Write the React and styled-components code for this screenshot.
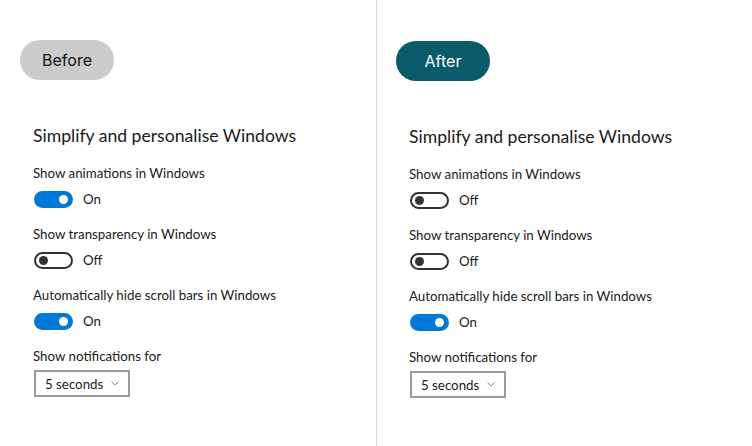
import React from 'react';
import styled, { createGlobalStyle } from 'styled-components';

const GlobalStyle = createGlobalStyle`
    html, body {
        margin: 0;
        padding: 0;
        background: #fff;
    }
`;

const Page = styled.main`
    display: grid;
    grid-template-columns: 377px 1fr;
    width: 752px;
    height: 446px;
    overflow: hidden;
`;

const Panel = styled.section`
    padding: ${p => (p.$shift ? '1px' : '0')} 0 0 ${p => (p.$after ? '19px' : '20px')};
    border-right: ${p => (p.$after ? 'none' : '1px solid #d6d6d6')};
`;

const Pill = styled.div`
    margin-top: 40px;
    width: 94px;
    height: 40px;
    border-radius: 20px;
    display: flex;
    align-items: center;
    justify-content: center;
    font-family: Inter, 'Noto Sans', sans-serif;
    font-size: 16px;
    font-weight: 400;
    color: ${p => (p.$after ? '#fff' : '#111')};
    background: ${p => (p.$after ? '#0a5b6a' : '#cccccc')};
`;

const Settings = styled.div`
    margin-top: 44px;
    padding-left: 13px;
    font-family: 'Segoe UI', Lato, 'Noto Sans', sans-serif;
    color: #1a1a1a;
`;

const Title = styled.h2`
    margin: 0 0 16px;
    font-size: 17.6px;
    font-weight: 400;
    line-height: 24px;
`;

const Setting = styled.div`
    margin-bottom: ${p => (p.$last ? '0' : '16px')};
`;

const Label = styled.div`
    font-size: 13.3px;
    line-height: 18px;
    margin-bottom: ${p => (p.$compact ? '5px' : '7px')};
`;

const ToggleRow = styled.div`
    display: flex;
    align-items: center;
    gap: 10px;
    height: 20px;
    padding-left: 1px;
    font-size: 13.3px;
`;

const Track = styled.span`
    box-sizing: border-box;
    width: 39px;
    height: 17px;
    border-radius: 9px;
    display: flex;
    align-items: center;
    justify-content: ${p => (p.$on ? 'flex-end' : 'flex-start')};
    padding: 0 3px;
    background: ${p => (p.$on ? '#0078d7' : '#fff')};
    border: 2px solid ${p => (p.$on ? '#0078d7' : '#333')};
`;

const Knob = styled.span`
    width: 9px;
    height: 9px;
    border-radius: 50%;
    background: ${p => (p.$on ? '#fff' : '#333')};
`;

const Select = styled.div`
    box-sizing: border-box;
    margin-left: 1px;
    width: 96px;
    height: 27px;
    border: 2px solid #9a9a9a;
    display: flex;
    align-items: center;
    justify-content: space-between;
    padding: 0 9px 0 9px;
    font-size: 13.3px;
`;

const Toggle = ({ on }) => (
    <ToggleRow>
        <Track $on={on}>
            <Knob $on={on} />
        </Track>
        <span>{on ? 'On' : 'Off'}</span>
    </ToggleRow>
);

const Chevron = () => (
    <svg width="8" height="5" viewBox="0 0 8 5">
        <path d="M0.5 0.5 L4 4 L7.5 0.5" fill="none" stroke="#8a8a8a" strokeWidth="1" />
    </svg>
);

const SettingsPanel = ({ after, animations }) => (
    <Panel $after={after} $shift={after}>
        <Pill $after={after}>{after ? 'After' : 'Before'}</Pill>
        <Settings>
            <Title>Simplify and personalise Windows</Title>
            <Setting>
                <Label>Show animations in Windows</Label>
                <Toggle on={animations} />
            </Setting>
            <Setting>
                <Label>Show transparency in Windows</Label>
                <Toggle on={false} />
            </Setting>
            <Setting>
                <Label>Automatically hide scroll bars in Windows</Label>
                <Toggle on />
            </Setting>
            <Setting $last>
                <Label $compact>Show notifications for</Label>
                <Select>
                    <span>5 seconds</span>
                    <Chevron />
                </Select>
            </Setting>
        </Settings>
    </Panel>
);

const App = () => (
    <>
        <GlobalStyle />
        <Page>
            <SettingsPanel animations />
            <SettingsPanel after animations={false} />
        </Page>
    </>
);

export default App;
